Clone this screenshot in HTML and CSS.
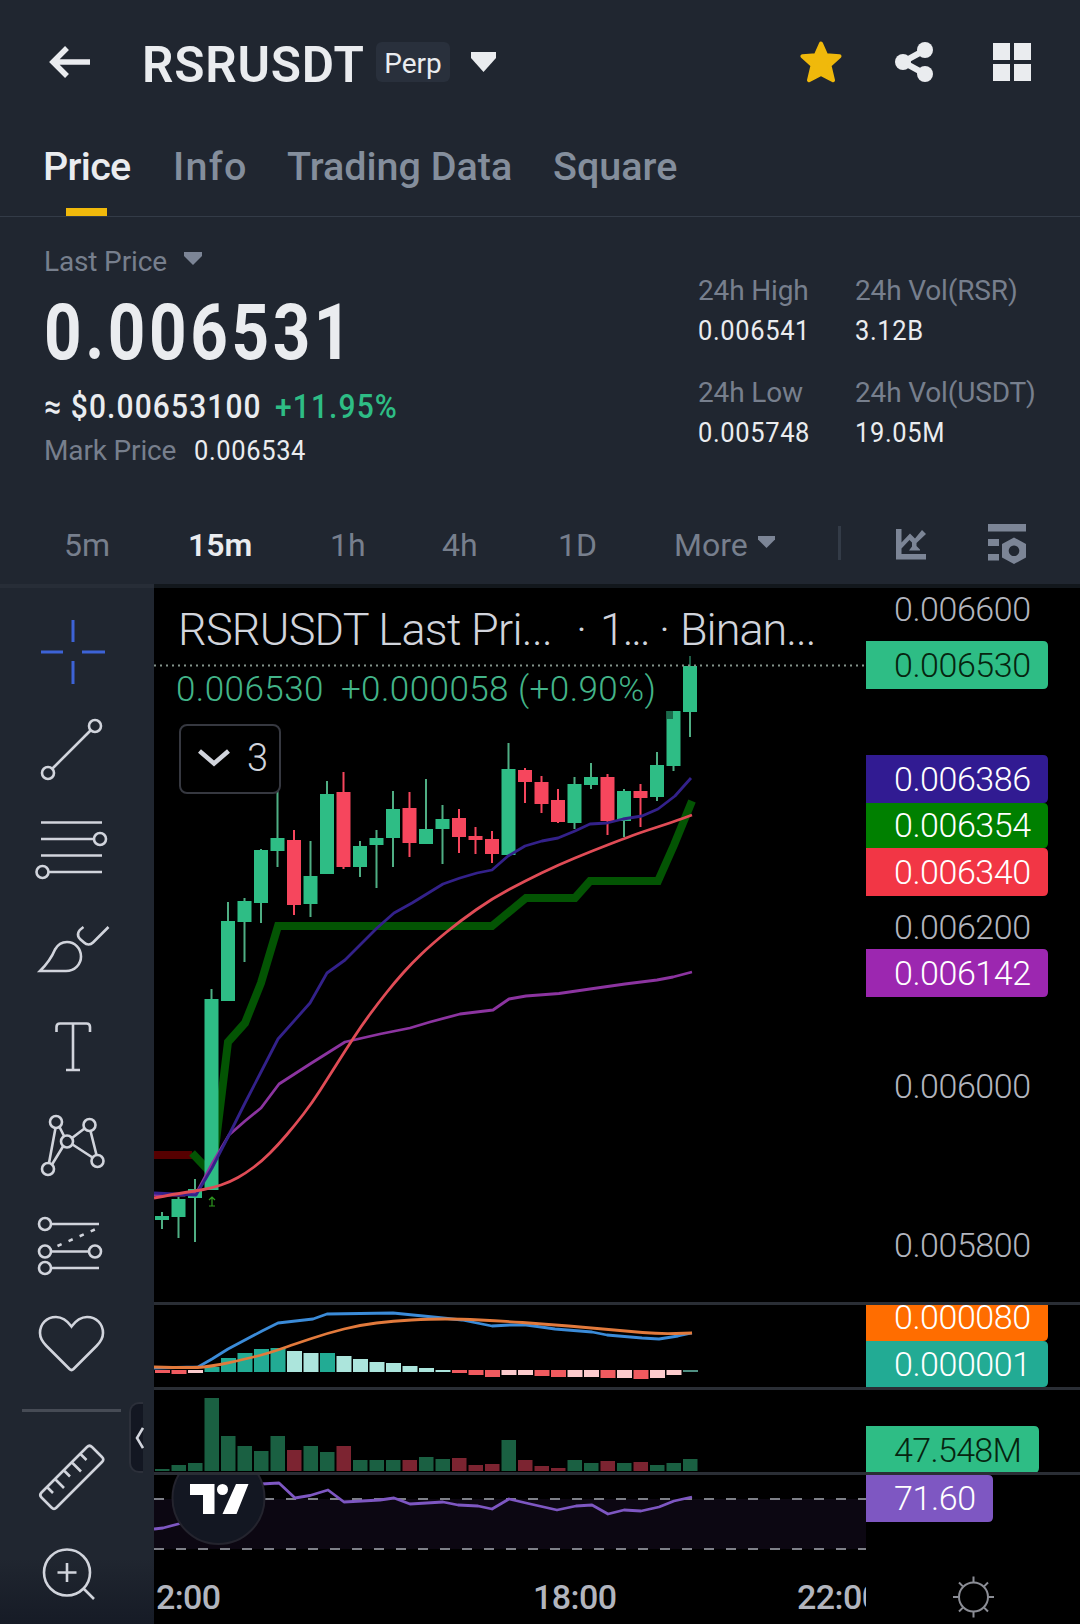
FILE: index.html
```html
<!DOCTYPE html>
<html lang="en">
<head>
    <meta charset="UTF-8">
    <meta name="viewport" content="width=device-width, initial-scale=1.0">
    <title>RSRUSDT Perp</title>
    <link rel="stylesheet" href="styles.css">
</head>
<body>
    <header class="topbar">
        <svg class="back" width="44" height="36" viewBox="0 0 44 36"><path d="M42 18H6M19 4L5 18l14 14" /></svg>
        <h1 class="symbol">RSRUSDT</h1>
        <span class="badge">Perp</span>
        <svg class="caret caret-lg" width="25" height="20" viewBox="0 0 25 20"><path d="M0 0h25v6L12.500 20 0 6z" /></svg>
        <div class="actions">
            <svg width="42" height="42" viewBox="0 0 42 42"><path class="star" d="M21 2.500l5.200 11.800 13.300.9-10 9.200 3.500 14.800L21 33 9 39.200l3.500-14.800-10-9.200 13.300-.9z" /></svg>
            <svg width="40" height="42" viewBox="0 0 40 42"><path class="share-line" d="M31 9L9 21l22 12" /><circle cx="9" cy="21" r="8" /><circle cx="31" cy="9" r="8" /><circle cx="31" cy="33" r="8" /></svg>
            <svg width="38" height="38" viewBox="0 0 38 38"><path d="M0 0h17v17H0zM21 0h17v17H21zM0 21h17v17H0zM21 21h17v17H21z" /></svg>
        </div>
    </header>

    <nav class="tabs">
        <a class="tab active">Price</a>
        <a class="tab tab-info">Info</a>
        <a class="tab tab-data">Trading Data</a>
        <a class="tab tab-square">Square</a>
    </nav>

    <section class="summary">
        <div class="price">
            <div class="label">Last Price <svg class="caret" width="18" height="13" viewBox="0 0 25 20" preserveAspectRatio="none"><path d="M0 0h25v6L12.500 20 0 6z" /></svg></div>
            <div class="last">0.006531</div>
            <div class="converted"><span>≈ <b>$0.00653100</b></span><span class="change">+11.95%</span></div>
            <div class="mark"><span class="label">Mark Price</span><span class="value">0.006534</span></div>
        </div>
        <div class="stats">
            <div class="stat"><span class="label">24h High</span><span class="value">0.006541</span></div>
            <div class="stat"><span class="label">24h Vol(RSR)</span><span class="value">3.12B</span></div>
            <div class="stat"><span class="label">24h Low</span><span class="value">0.005748</span></div>
            <div class="stat"><span class="label">24h Vol(USDT)</span><span class="value">19.05M</span></div>
        </div>
    </section>

    <nav class="intervals">
        <span>5m</span>
        <span class="active">15m</span>
        <span>1h</span>
        <span>4h</span>
        <span>1D</span>
        <span class="more">More <svg class="caret" width="17" height="12" viewBox="0 0 25 20" preserveAspectRatio="none"><path d="M0 0h25v6L12.500 20 0 6z" /></svg></span>
        <i class="separator"></i>
        <svg width="31" height="32" viewBox="0 0 31 32"><path d="M0 1h5.500v13.500L14 5.500l5 5L26 2l4 4-9.500 9v3l3.500 3.500v1h-11l3-4v-4l-2.500-2.500-8 8.500V26H30v5.500H0z" /></svg>
        <svg width="38" height="40" viewBox="0 0 38 40"><path fill-rule="evenodd" d="M0 0h38v7.500H0zM0 15h11v7H0zM0 30h11v6.500H0zM26 13.500l12 6.500v13.500L26 40l-12-6.500V20zM26 21.500a5.300 5.300 0 1 0 .01 0z" /></svg>
    </nav>

    <main class="workspace">
        <aside class="tools">
            <svg height="112" viewBox="0 0 154 112"><path class="cross" d="M41 64h22M82 64h23M73 32v22M73 73v23" /></svg>
            <svg height="100" viewBox="0 0 154 100"><circle cx="48" cy="73" r="6" /><circle cx="95" cy="26" r="6" /><path d="M52.500 68.500l38-38" /></svg>
            <svg height="100" viewBox="0 0 154 100"><path d="M41 22.500h61M41 39h53M41 55.500h61M49 72h53" /><circle cx="100" cy="39" r="6" /><circle cx="42.500" cy="72" r="6" /></svg>
            <svg height="100" viewBox="0 0 154 100"><path d="M40 71h26c9 0 15-7 15-14.500C81 48 74.500 42 67 42c-6 0-9.500 3-12 7.500C51.500 58 48 63 40 71zM83.500 27c-6 4-7 8-3.500 12l4 3.500c3 3 6.500 2.500 9 0L108.500 27" /></svg>
            <svg height="100" viewBox="0 0 154 100"><path d="M56.500 32v-5q0-3.500 3.500-3.500h26.500q3.500 0 3.500 3.500v5M73 23.500V70M66 70h14" /></svg>
            <svg height="100" viewBox="0 0 154 100"><path d="M55.500 28L49 63M59.500 27l4.500 9M52 64.500l11-18M72 38l12.500-9.500M72.500 44.500l20 13M90.500 31l6 24" /><circle cx="56" cy="22" r="6" /><circle cx="89.500" cy="25" r="6" /><circle cx="67" cy="41.500" r="6" /><circle cx="48" cy="69" r="6" /><circle cx="97.500" cy="61" r="6" /></svg>
            <svg height="100" viewBox="0 0 154 100"><path d="M51 24h48M51 51.500h38M51 68h48" /><path stroke-dasharray="4.500 7.600" d="M57.500 46L96 29" /><circle cx="45" cy="24" r="6" /><circle cx="45" cy="51.500" r="6" /><circle cx="95" cy="51.500" r="6" /><circle cx="45" cy="68" r="6" /></svg>
            <svg height="100" viewBox="0 0 154 100"><path d="M71.500 26.500C66 19 61 17 56 17c-9.500 0-16 7-16 16 0 5.500 2.500 9 6.500 13l23 23q2 2 4 0l23-23c4-4 6.500-7.500 6.500-13 0-9-6.500-16-16-16-5 0-10 2-15.500 9.500z" /></svg>
            <hr>
            <svg height="128" viewBox="0 0 154 128"><path d="M41.500 80.500L87 35q2.500-2.500 5 0l10 10q2.500 2.500 0 5L56.500 95.500q-2.500 2.500-5 0l-10-10q-2.500-2.500 0-5zM47 75l6 6M55 67l9 9M64 58.500l6 6M72 50.500l9 9M80.500 42l6 6" /></svg>
            <svg height="84" viewBox="0 0 154 84"><circle cx="67" cy="32.500" r="23" /><path d="M57.500 32.500h19M67 23v19M83.500 48.500L94 59" /></svg>
            <button class="collapse"><svg width="9" height="22" viewBox="0 0 9 22"><path d="M8 1L2 11l6 10" /></svg></button>
        </aside>

        <div class="chart">
            <svg id="pane-price" width="926" height="714" viewBox="154 588 926 714"></svg>
            <svg id="pane-macd" width="926" height="82" viewBox="154 1305 926 82"></svg>
            <svg id="pane-volume" width="926" height="82" viewBox="154 1390 926 82"></svg>
            <svg id="pane-rsi" width="926" height="149" viewBox="154 1475 926 149"></svg>

            <div class="legend">
                <div class="legend-title"><span class="name">RSRUSDT Last Pri...</span><span class="dot">·</span><span class="res">1...</span><span class="dot2">·</span><span class="exchange">Binan...</span></div>
                <div class="legend-values"><span>0.006530</span><span>+0.000058 (+0.90%)</span></div>
                <div class="legend-toggle"><svg width="34" height="20" viewBox="0 0 34 20"><path d="M2.500 3L17 15.500 31.500 3" /></svg>3</div>
            </div>
        </div>
    </main>

    <script src="chart.js"></script>
</body>
</html>
```

FILE: styles.css
```css
:root {
    --bg: #202630;
    --text: #eaecef;
    --muted: #848e9c;
    --dim: #777f8d;
    --green: #2ebd85;
    --red: #f6465d;
    --yellow: #f0b90b;
    --line: #2a2e35;
}
* {
    box-sizing: border-box;
}
body {
    margin: 0;
    width: 1080px;
    height: 1624px;
    overflow: hidden;
    background-color: var(--bg);
    color: var(--text);
    font-family: Roboto, 'Liberation Sans', sans-serif;
}
svg {
    display: block;
    flex: none;
}

/* Header */
.topbar {
    display: flex;
    align-items: center;
    height: 127px;
    padding: 0 49px 3px 48px;
}
.back path {
    fill: none;
    stroke: var(--text);
    stroke-width: 5.500;
}
.symbol {
    width: 234px;
    margin: 5px 0 0 50px;
    font-size: 49.500px;
    line-height: 60px;
    font-weight: 600;
    letter-spacing: 0.800px;
}
.badge {
    width: 74px;
    height: 40px;
    margin-right: 21px;
    border-radius: 6px;
    background-color: #29303c;
    font-size: 28px;
    line-height: 43px;
    text-align: center;
}
.caret {
    fill: #7c8596;
}
.caret-lg {
    fill: var(--text);
}
.actions {
    display: flex;
    align-items: center;
    margin-left: auto;
    fill: var(--text);
}
.actions svg + svg {
    margin-left: 52px;
}
.actions svg + svg + svg {
    margin-left: 59px;
}
.star {
    fill: var(--yellow);
    stroke: var(--yellow);
    stroke-width: 4;
    stroke-linejoin: round;
}
.share-line {
    fill: none;
    stroke: var(--text);
    stroke-width: 6;
}

/* Tabs */
.tabs {
    display: flex;
    height: 90px;
    padding-left: 43px;
    border-bottom: 1px solid #333b47;
    color: var(--muted);
    font-size: 39.500px;
    font-weight: 500;
    line-height: 80px;
}
.tab {
    position: relative;
    white-space: nowrap;
}
.tab.active {
    width: 130px;
    color: var(--text);
    letter-spacing: -0.700px;
}
.tab-info {
    width: 114px;
    letter-spacing: 1.300px;
}
.tab-data {
    width: 266px;
}
.tab.active::after {
    content: '';
    position: absolute;
    left: 23px;
    bottom: 0;
    width: 41px;
    height: 8px;
    background-color: var(--yellow);
}

/* Price summary */
.summary {
    display: flex;
    justify-content: space-between;
    height: 288px;
    line-height: 40px;
    font-size: 28px;
}
.label {
    color: var(--dim);
    letter-spacing: -0.150px;
}
.price {
    width: 420px;
    padding: 25px 0 0 44px;
}
.price > .label {
    display: flex;
    gap: 17px;
}
.price > .label .caret {
    margin-top: 10px;
}
/* Numbers are set slightly condensed */
.last,
.converted,
.value {
    transform-origin: left;
}
.last {
    margin: 11px 0 13px;
    font-size: 78px;
    line-height: 80px;
    font-weight: 700;
    letter-spacing: 4.300px;
    transform: scaleX(0.84);
}
.converted {
    display: flex;
    gap: 15px;
    font-size: 34px;
    font-weight: 500;
    letter-spacing: 1.300px;
    white-space: nowrap;
    transform: scaleX(0.88);
}
.converted b {
    font-weight: 500;
}
.change {
    color: var(--green);
}
.mark {
    display: flex;
    gap: 18px;
    margin-top: 5px;
}
.value {
    letter-spacing: 0.700px;
    transform: scaleX(0.91);
}
.stats {
    display: grid;
    grid-template-columns: 157px 225px;
    grid-auto-rows: 80px;
    row-gap: 22px;
    padding-top: 54px;
    white-space: nowrap;
}
.stat {
    display: flex;
    flex-direction: column;
}

/* Intervals */
.intervals {
    display: grid;
    grid-template-columns: 124px 142px 112px 116px 116px 164px 58px 92px 1fr;
    align-items: center;
    height: 79px;
    padding-left: 64px;
    color: var(--dim);
    fill: #7c8596;
    font-size: 32px;
}
.intervals > svg {
    margin-top: -2px;
}
.intervals .active {
    color: var(--text);
    font-weight: 600;
}
.more {
    display: flex;
    gap: 10px;
}
.more .caret {
    margin-top: 10px;
}
.separator {
    width: 3px;
    height: 34px;
    margin-top: -4px;
    background-color: #333b47;
}

/* Drawing tools */
.workspace {
    display: flex;
    height: 1040px;
}
.tools {
    position: relative;
    width: 154px;
    border-top: 4px solid #272d37;
    background-image: linear-gradient(transparent 970px, #161b26 1036px);
}
.tools svg {
    fill: none;
    stroke: #d1d4dc;
    stroke-width: 2.600;
}
.tools > svg {
    width: 154px;
}
.tools .cross {
    stroke: #3d63d6;
    stroke-width: 3;
}
.tools hr {
    width: 99px;
    height: 3px;
    margin: 9px 0 0 22px;
    border: 0;
    background-color: #464b55;
}
.collapse {
    position: absolute;
    top: 814px;
    left: 129px;
    width: 14px;
    height: 71px;
    padding: 0 0 0 4px;
    border: 2px solid #2c303a;
    border-right: 0;
    border-radius: 10px 0 0 10px;
    background-color: #131722;
}

/* Chart */
.chart {
    position: relative;
    width: 926px;
    border-top: 4px solid #12171c;
    background-color: #000;
}
#pane-macd,
#pane-volume,
#pane-rsi {
    border-top: 3px solid var(--line);
    box-sizing: content-box;
}
.legend {
    position: absolute;
    top: 0;
    left: 0;
    color: #d1d4dc;
    font-weight: 300;
}
.legend-title {
    display: flex;
    margin: 15px 0 0 24px;
    font-size: 45px;
    line-height: 54px;
    white-space: nowrap;
}
.legend-title .name {
    width: 398px;
    letter-spacing: -0.700px;
}
.legend-title .dot {
    width: 24px;
}
.legend-title .res {
    width: 59px;
    letter-spacing: -2.200px;
}
.legend-title .dot2 {
    width: 21px;
}
.legend-title .exchange {
    letter-spacing: -1px;
}
.legend-values {
    display: flex;
    gap: 17px;
    margin: 12px 0 0 22px;
    color: #43b489;
    font-size: 35px;
    line-height: 42px;
    letter-spacing: 0.450px;
}
.legend-toggle {
    display: flex;
    align-items: center;
    gap: 16px;
    width: 102px;
    height: 70px;
    margin: 13px 0 0 25px;
    padding: 0 0 3px 16px;
    border: 2px solid #363840;
    border-radius: 8px;
    background-color: #000;
    font-size: 38px;
}
.legend-toggle path {
    fill: none;
    stroke: #d1d4dc;
    stroke-width: 4.500;
}
.tick,
.tag text {
    font-size: 34px;
    font-weight: 300;
}
.tick {
    fill: #b2b5be;
}
.time {
    fill: #b2b5be;
    font-size: 34px;
    font-weight: 500;
}
```

FILE: chart.js
```js
const NS = 'http://www.w3.org/2000/svg';
const GREEN = '#2ebd85';
const RED = '#f6465d';
const PLOT_RIGHT = 866;
const LABEL_X = 894;

// [high, top, bottom, low, up]
const candles = [
    [1212, 1216, 1220, 1229, 1], [1197, 1199, 1217, 1238, 1], [1179, 1189, 1198, 1242, 1],
    [989, 999, 1190, 1190, 1], [902, 921, 1001, 1001, 1], [898, 901, 922, 962, 1],
    [849, 850, 903, 923, 1], [780, 838, 851, 867, 1], [830, 840, 905, 915, 0],
    [841, 876, 904, 917, 1], [781, 794, 874, 874, 1], [772, 792, 867, 869, 0],
    [841, 846, 867, 877, 1], [830, 838, 845, 888, 1], [791, 809, 838, 867, 1],
    [792, 808, 843, 857, 0], [779, 829, 844, 844, 1], [805, 819, 829, 864, 1],
    [809, 818, 837, 853, 0], [827, 836, 840, 854, 0], [831, 839, 854, 863, 0],
    [743, 769, 855, 855, 1], [768, 770, 782, 803, 0], [776, 782, 804, 813, 0],
    [789, 800, 822, 823, 0], [777, 784, 823, 829, 1], [763, 777, 785, 789, 1],
    [774, 777, 821, 835, 0], [789, 791, 821, 837, 1], [784, 791, 798, 827, 0],
    [752, 765, 797, 801, 1], [711, 711, 766, 771, 1], [666, 666, 712, 737, 1]
];

// [top, bottom, colour]
const T = '#22ab94', L = '#ace5dc', R = '#f05a5f', P = '#fccbcd';
const histogram = [
    [1370, 1373, R], [1370, 1374, R], [1370, 1373, P], [1367, 1372, T], [1358, 1372, T], [1353, 1372, T],
    [1349, 1372, T], [1348, 1372, T], [1351, 1372, L], [1353, 1372, L], [1353, 1372, T], [1356, 1372, L],
    [1359, 1372, L], [1362, 1372, L], [1363, 1372, L], [1366, 1372, L], [1368, 1372, L], [1370, 1372, L],
    [1370, 1373, R], [1370, 1375, R], [1370, 1377, R], [1370, 1375, P], [1370, 1375, P], [1370, 1376, R],
    [1370, 1377, R], [1370, 1377, P], [1370, 1377, P], [1370, 1378, R], [1370, 1378, P], [1370, 1379, R],
    [1370, 1378, P], [1370, 1375, P], [1370, 1372, '#4f8f82']
];

const volumes = [
    1469, 1465, 1463, 1398, 1436, 1446, 1451, 1436, 1450, 1446, 1452, 1446, 1460, 1460, 1460, 1460, 1457,
    1459, 1458, 1465, 1464, 1440, 1460, 1466, 1468, 1460, 1463, 1461, 1463, 1462, 1465, 1463, 1459
];

function add(parent, name, attrs, text) {
    const el = document.createElementNS(NS, name);
    for (const key in attrs) el.setAttribute(key, attrs[key]);
    if (text) el.textContent = text;
    parent.appendChild(el);
    return el;
}

function barX(i) {
    return 162 + i * 16.5;
}

function rect(parent, x, y, width, height, fill) {
    return add(parent, 'rect', { x, y, width, height, fill });
}

function line(parent, points, stroke, width) {
    return add(parent, 'polyline', { points, stroke, fill: 'none', 'stroke-width': width || 2.8, 'stroke-linejoin': 'round' });
}

// Same as line(), rounded through the midpoints of the segments
function curve(parent, points, stroke) {
    const p = points.split(' ').map(s => s.split(',').map(Number));
    let d = `M${p[0]}`;
    for (let i = 1; i < p.length - 1; i++) {
        d += `Q${p[i]} ${(p[i][0] + p[i + 1][0]) / 2},${(p[i][1] + p[i + 1][1]) / 2}`;
    }
    d += `L${p[p.length - 1]}`;
    add(parent, 'path', { d, stroke, fill: 'none', 'stroke-width': 2.8 });
}

function tick(parent, y, text) {
    add(parent, 'text', { class: 'tick', x: LABEL_X, y, textLength: 137 }, text);
}

// Coloured value label on the price axis, square on the left side
function tag(parent, top, bottom, right, baseline, fill, color, text, length) {
    const g = add(parent, 'g', { class: 'tag' });
    add(g, 'path', { fill, d: `M${PLOT_RIGHT} ${top}H${right - 5}q5 0 5 5V${bottom - 5}q0 5 -5 5H${PLOT_RIGHT}z` });
    add(g, 'text', { x: LABEL_X, y: baseline, fill: color, textLength: length }, text);
}

function drawPrice() {
    const pane = document.getElementById('pane-price');
    line(pane, '154,1155 192,1155', '#560000', 8);
    const trend = line(pane, '192,1153 212,1174 228,1042 245,1023 261,983 278,926 492,926 526,898 575,898 590,881 658,881 674,845 692,801', '#035403', 8);
    trend.setAttribute('stroke-linejoin', 'miter');

    candles.forEach(([high, top, bottom, low, up], i) => {
        const color = up ? GREEN : RED;
        rect(pane, barX(i) - 1, high, 2, low - high, up ? '#4fae83' : RED);
        rect(pane, barX(i) - 7, top, 14, bottom - top, color);
    });
    rect(pane, 689, 656, 2, 10, '#1d5b43');
    rect(pane, 667, 711, 6, 8, '#1b6b4c');

    line(pane, '154,1195 185,1195 197,1192 212,1164 229,1135 245,1121 261,1108 279,1084 310,1064 345,1042 380,1034 410,1028 430,1022 460,1014 493,1010 509,999 526,996 559,993.5 590,989 625,984 657,980 673,977 692,972', '#8c34a0');
    line(pane, '154,1193 196,1195 212,1168 228,1137 245,1103 261,1072 278,1039 310,1003 327,973 345,960 377,928 394,913 412,903 443,884 460,878 477,873 492,870 508,856 525,846 542,841 558,838 575,831 590,824 607,823 623,819 642,816 658,809 675,796 691,778', '#33218a');
    curve(pane, '154,1198 175,1194 195,1191 212,1188 230,1182 246,1173 262,1161 278,1145 295,1125 312,1103 328,1078 345,1051 362,1025 379,1002 395,982 412,963 432,944 460,921 493,898 525,881 558,865 592,851 623,839 642,832 673,822 692,815', '#e04c56');

    add(pane, 'path', { d: 'M212 1206v-8M209 1200l3-3 3 3M209 1206h6', fill: 'none', stroke: '#2f9a1f', 'stroke-width': 1.2 });
    add(pane, 'path', { d: `M154 665.500H${PLOT_RIGHT}`, stroke: '#84948b', 'stroke-width': 2, 'stroke-dasharray': '2 4' });

    tick(pane, 621, '0.006600');
    tag(pane, 641, 689, 1048, 677, GREEN, '#06240f', '0.006530', 137);
    tag(pane, 755, 803, 1048, 791, '#311b92', '#fff', '0.006386', 137);
    tag(pane, 803, 848, 1048, 837, '#008000', '#fff', '0.006354', 137);
    tag(pane, 848, 896, 1048, 884, '#f23645', '#fff', '0.006340', 137);
    tick(pane, 939, '0.006200');
    tag(pane, 949, 997, 1048, 985, '#9c27b0', '#fff', '0.006142', 137);
    tick(pane, 1098, '0.006000');
    tick(pane, 1257, '0.005800');
}

function drawMacd() {
    const pane = document.getElementById('pane-macd');
    histogram.forEach(([top, bottom, color], i) => rect(pane, barX(i) - 7, top, 15, bottom - top, color));
    line(pane, '154,1368 198,1367 212,1359 228,1349 262,1331 278,1323 313,1319 327,1314 393,1313 443,1318 462,1320 492,1326 510,1325 526,1325 541,1327 555,1329 592,1332 607,1335 642,1338 659,1339 678,1336 692,1333', '#3b8bd8');
    curve(pane, '154,1367 195,1368 212,1366 228,1363 245,1359 262,1355 278,1350 295,1344 328,1333 360,1325 393,1321 430,1319 460,1319 500,1321 545,1324 592,1328 625,1331 660,1334 692,1333', '#e27a3c');
    tag(pane, 1295, 1341, 1048, 1329, '#ff6d00', '#fff', '0.000080', 137);
    tag(pane, 1341, 1387, 1048, 1376, T, '#fff', '0.000001', 137);
}

function drawVolume() {
    const pane = document.getElementById('pane-volume');
    volumes.forEach((top, i) => rect(pane, barX(i) - 7, top, 14.5, 1471 - top, candles[i][4] ? '#1a6042' : '#7c2431'));
    tag(pane, 1426, 1473, 1039, 1462, GREEN, '#06240f', '47.548M', 128);
}

function drawRsi() {
    const pane = document.getElementById('pane-rsi');
    rect(pane, 154, 1499, PLOT_RIGHT - 154, 50, '#0c0712');
    [1499, 1549].forEach(y => {
        add(pane, 'path', { d: `M154 ${y}H${PLOT_RIGHT}`, stroke: '#7e8088', 'stroke-width': 2, 'stroke-dasharray': '10 12' });
    });
    line(pane, '154,1529 163,1528 182,1523 212,1480 261,1484 279,1483 295,1498 310,1495.5 328,1490 344,1502 380,1500 394,1498 410,1504 443,1502 458,1505 478,1506 492,1509 509,1499 526,1503 557,1510 576,1506 592,1505 608,1514 624,1510 641,1511 659,1507 674,1501 692,1497', '#7e57c2');

    add(pane, 'circle', { cx: 218.5, cy: 1498, r: 46, fill: '#131722', stroke: '#24242e', 'stroke-width': 2 });
    add(pane, 'path', { fill: '#fff', d: 'M190 1484h24.500v30h-11.500v-19h-13zM236 1484h12.500l-12 30h-14z' });
    add(pane, 'circle', { cx: 222.5, cy: 1489.5, r: 5.5, fill: '#fff' });

    tag(pane, 1475, 1522, 993, 1510, '#7e57c2', '#fff', '71.60', 82);

    add(pane, 'text', { class: 'time', x: 156, y: 1609, textLength: 65 }, '2:00');
    add(pane, 'text', { class: 'time', x: 533, y: 1609, textLength: 84 }, '18:00');
    const last = add(pane, 'svg', { x: 780, y: 1570, width: PLOT_RIGHT - 780, height: 54 });
    add(last, 'text', { class: 'time', x: 17, y: 39, textLength: 84 }, '22:00');

    // Axis settings
    let rays = '';
    for (let a = 0; a < 8; a++) {
        const c = Math.cos(a * Math.PI / 4), s = Math.sin(a * Math.PI / 4);
        rays += `M${973.5 + 15 * c} ${1597 + 15 * s}L${973.5 + 20.5 * c} ${1597 + 20.5 * s}`;
    }
    add(pane, 'circle', { cx: 973.5, cy: 1597, r: 14.5, fill: 'none', stroke: '#8b8d95', 'stroke-width': 2 });
    add(pane, 'path', { d: rays, stroke: '#8b8d95', 'stroke-width': 2 });
}

drawPrice();
drawMacd();
drawVolume();
drawRsi();
```
